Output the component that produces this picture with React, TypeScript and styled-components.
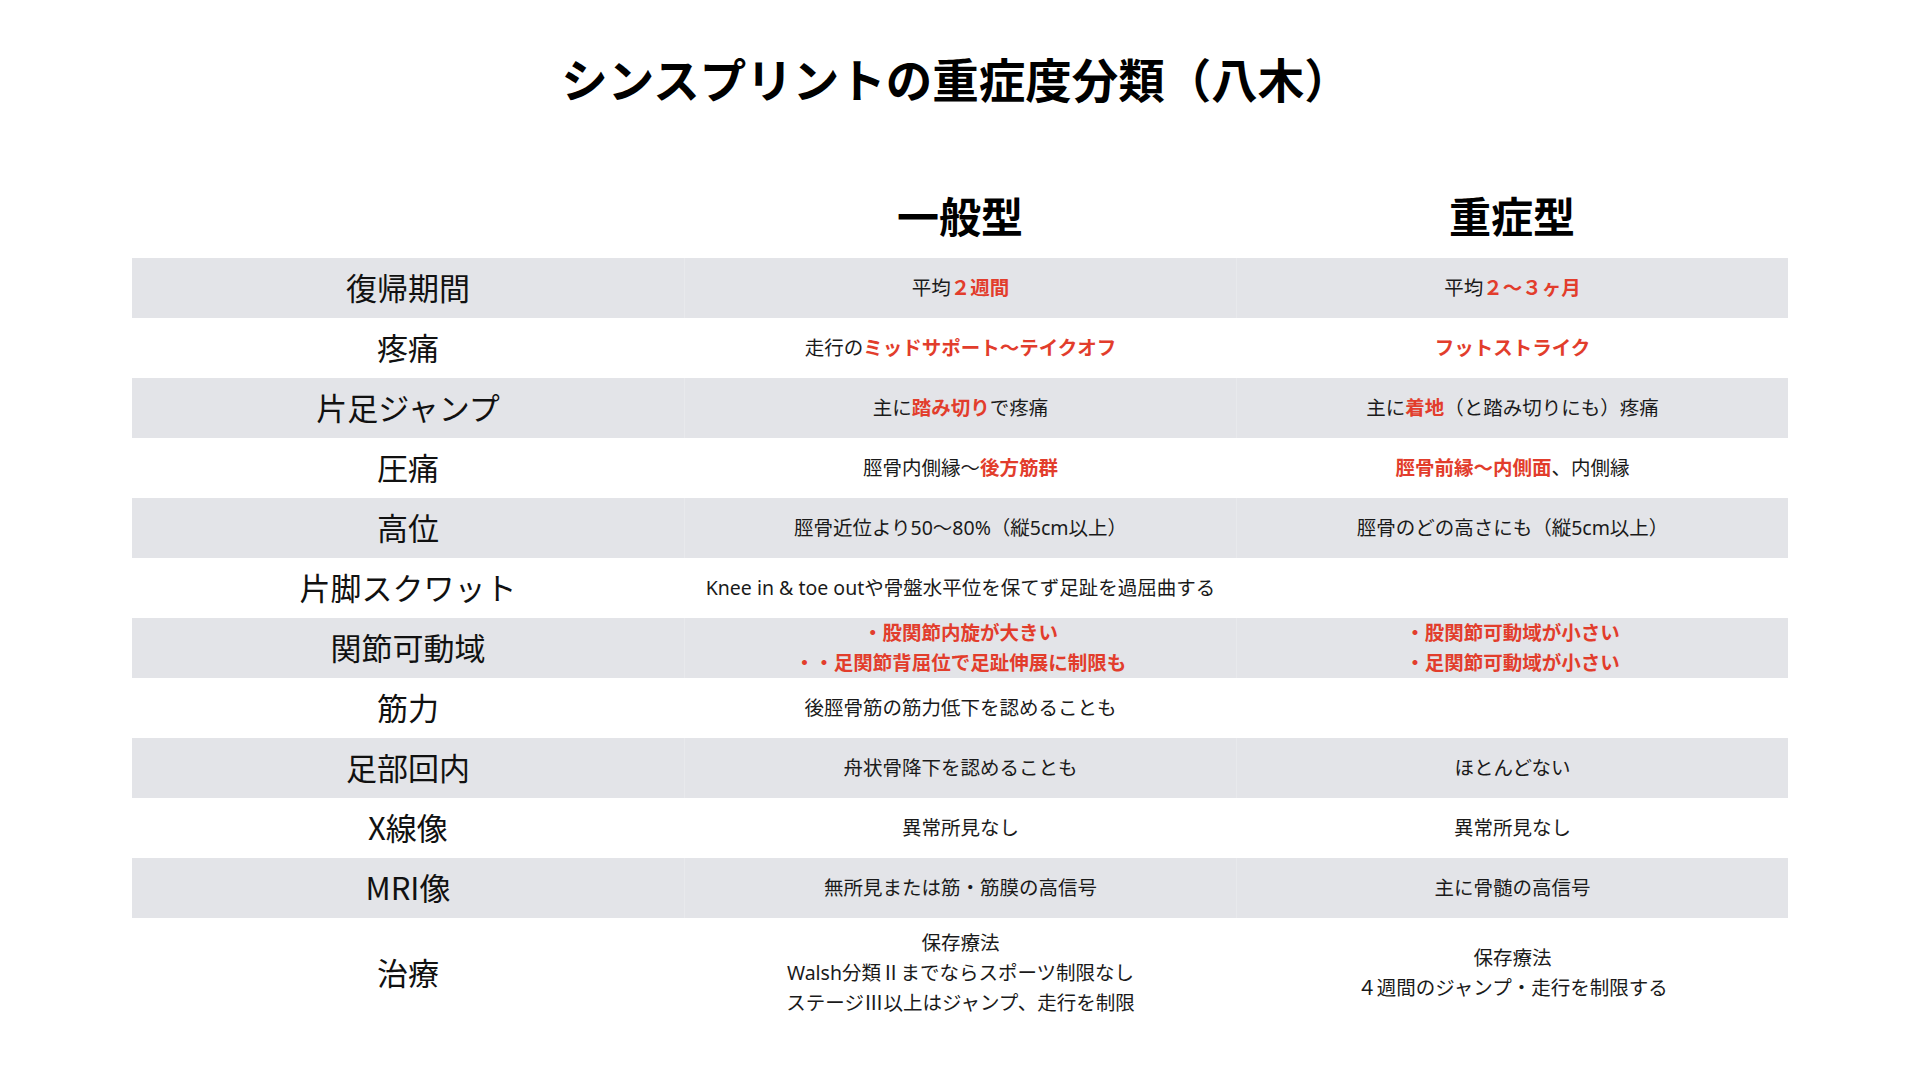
import React from "react";
import styled, { createGlobalStyle } from "styled-components";

const Global = createGlobalStyle`
  html, body { margin: 0; padding: 0; background: #ffffff; }
  body { font-family: "Noto Sans CJK JP", "Noto Sans", sans-serif; color: #1a1a1a; }
`;

const Page = styled.div`
  width: 1920px;
  height: 1080px;
  display: flex;
  flex-direction: column;
  align-items: center;
  background: #fff;
`;

const Title = styled.h1`
  margin: 48px 0 0;
  padding-right: 8px;
  height: 60px;
  line-height: 60px;
  font-size: 46.5px;
  font-weight: 700;
  color: #000;
  letter-spacing: 0;
`;

const Table = styled.div`
  margin-top: 68px;
  width: 1656px;
  display: flex;
  flex-direction: column;
`;

const Row = styled.div<{ $shade?: boolean; $h?: number }>`
  display: grid;
  grid-template-columns: repeat(3, 1fr);
  height: ${(p) => p.$h ?? 60}px;
  background: ${(p) => (p.$shade ? "#e3e4e8" : "transparent")};
`;

const HeaderCell = styled.div`
  display: flex;
  align-items: center;
  justify-content: center;
  padding-bottom: 6px;
  font-size: 42px;
  font-weight: 700;
  color: #000;
`;

const Label = styled.div`
  display: flex;
  align-items: center;
  justify-content: center;
  padding-bottom: 4px;
  font-size: 31px;
  font-weight: 400;
  color: #111;
`;

const Cell = styled.div<{ $shade?: boolean }>`
  display: flex;
  flex-direction: column;
  align-items: center;
  justify-content: center;
  font-family: "Noto Sans", "Noto Sans CJK JP", sans-serif;
  font-size: 19.5px;
  line-height: 30px;
  color: #1a1a1a;
  text-align: center;
  border-left: 1px solid ${(p) => (p.$shade ? "#e8e9ec" : "transparent")};
`;

const Red = styled.span`
  color: #e23d2c;
  font-weight: 700;
`;

type RowData = {
  label: string;
  a: React.ReactNode;
  b: React.ReactNode;
  h?: number;
};

const rows: RowData[] = [
  {
    label: "復帰期間",
    a: (<span>平均<Red>２週間</Red></span>),
    b: (<span>平均<Red>２〜３ヶ月</Red></span>),
  },
  {
    label: "疼痛",
    a: (<span>走行の<Red>ミッドサポート〜テイクオフ</Red></span>),
    b: (<Red>フットストライク</Red>),
  },
  {
    label: "片足ジャンプ",
    a: (<span>主に<Red>踏み切り</Red>で疼痛</span>),
    b: (<span>主に<Red>着地</Red>（と踏み切りにも）疼痛</span>),
  },
  {
    label: "圧痛",
    a: (<span>脛骨内側縁〜<Red>後方筋群</Red></span>),
    b: (<span><Red>脛骨前縁〜内側面</Red>、内側縁</span>),
  },
  {
    label: "高位",
    a: "脛骨近位より50〜80%（縦5cm以上）",
    b: "脛骨のどの高さにも（縦5cm以上）",
  },
  {
    label: "片脚スクワット",
    a: "Knee in & toe outや骨盤水平位を保てず足趾を過屈曲する",
    b: "",
  },
  {
    label: "関節可動域",
    a: (
      <>
        <Red>・股関節内旋が大きい</Red>
        <Red>・・足関節背屈位で足趾伸展に制限も</Red>
      </>
    ),
    b: (
      <>
        <Red>・股関節可動域が小さい</Red>
        <Red>・足関節可動域が小さい</Red>
      </>
    ),
  },
  { label: "筋力", a: "後脛骨筋の筋力低下を認めることも", b: "" },
  { label: "足部回内", a: "舟状骨降下を認めることも", b: "ほとんどない" },
  { label: "X線像", a: "異常所見なし", b: "異常所見なし" },
  { label: "MRI像", a: "無所見または筋・筋膜の高信号", b: "主に骨髄の高信号" },
  {
    label: "治療",
    a: (
      <>
        <span>保存療法</span>
        <span>Walsh分類Ⅱまでならスポーツ制限なし</span>
        <span>ステージⅢ以上はジャンプ、走行を制限</span>
      </>
    ),
    b: (
      <>
        <span>保存療法</span>
        <span>４週間のジャンプ・走行を制限する</span>
      </>
    ),
    h: 110,
  },
];

export default function App() {
  return (
    <Page>
      <Global />
      <Title>シンスプリントの重症度分類（八木）</Title>
      <Table>
        <Row $h={82}>
          <HeaderCell />
          <HeaderCell>一般型</HeaderCell>
          <HeaderCell>重症型</HeaderCell>
        </Row>
        {rows.map((r, i) => {
          const shade = i % 2 === 0 && i < 11;
          return (
            <Row key={r.label} $shade={shade} $h={r.h}>
              <Label>{r.label}</Label>
              <Cell $shade={shade}>{r.a}</Cell>
              <Cell $shade={shade}>{r.b}</Cell>
            </Row>
          );
        })}
      </Table>
    </Page>
  );
}
